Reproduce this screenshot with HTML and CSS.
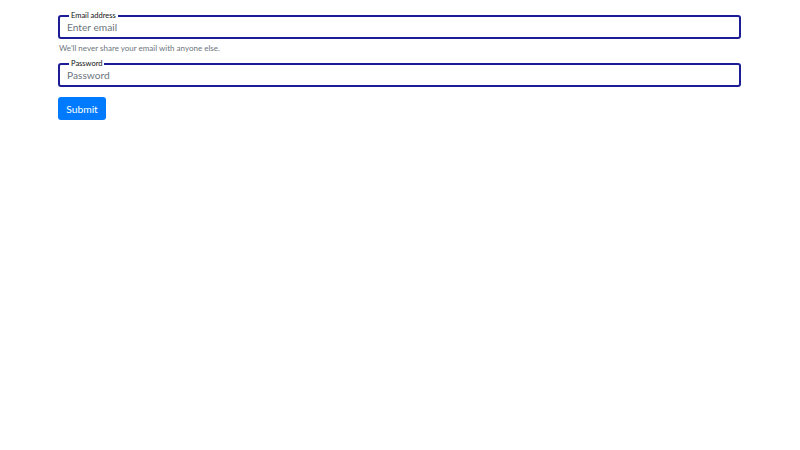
FILE: index.html
```html
<!DOCTYPE html>
<html>
<head>
<meta charset="utf-8">
<link rel="stylesheet" href="styles.css">
</head>
<body>
<form class="form">
  <fieldset class="field">
    <legend class="field-label">Email address</legend>
    <input class="field-input" type="email" placeholder="Enter email">
  </fieldset>
  <small class="help">We'll never share your email with anyone else.</small>
  <fieldset class="field">
    <legend class="field-label">Password</legend>
    <input class="field-input" type="password" placeholder="Password">
  </fieldset>
  <button class="btn" type="submit">Submit</button>
</form>
</body>
</html>
```
FILE: styles.css
```css
html, body {
  margin: 0;
  padding: 0;
  background: #fff;
}
body {
  font-family: Lato, "Noto Sans", sans-serif;
  color: #212529;
}
.form {
  width: 683px;
  margin: 0 0 0 58px;
  padding-top: 12px;
  display: flex;
  flex-direction: column;
  align-items: flex-start;
}
.field {
  box-sizing: border-box;
  width: 683px;
  margin: 0;
  padding: 0 7px 2px 7px;
  border: 2px solid #1c1c96;
  border-radius: 3px;
  display: block;
}
.field-label {
  font-size: 7.5px;
  line-height: 8px;
  padding: 0 2px;
  margin-left: 2px;
  color: #111;
}
.field-input {
  display: block;
  box-sizing: border-box;
  width: 100%;
  height: 15px;
  border: 0;
  outline: 0;
  padding: 0;
  margin: 0;
  font-family: inherit;
  font-size: 10.2px;
  line-height: 15px;
  color: #495057;
  background: transparent;
}
.field-input::placeholder {
  color: #6c757d;
}
.help {
  display: block;
  font-size: 8px;
  color: #6c757d;
  margin: 3px 0 6px 1px;
  line-height: 12px;
}
.btn {
  margin-top: 10px;
  width: 48px;
  height: 23px;
  border: 0;
  border-radius: 3px;
  background: #007bff;
  color: #fff;
  font-family: inherit;
  font-size: 10.3px;
  padding: 0;
}
```
